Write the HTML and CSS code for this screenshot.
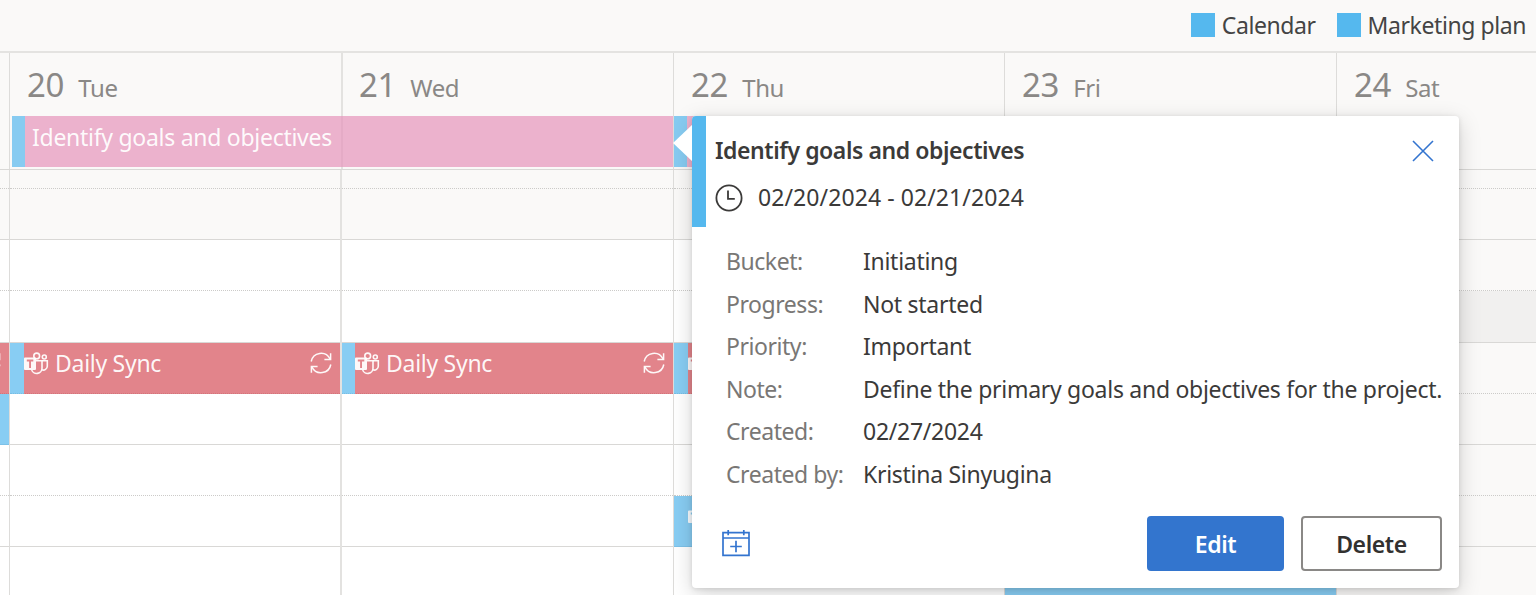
FILE: index.html
```html
<!DOCTYPE html>
<html lang="en">
  <head>
    <meta charset="UTF-8" />
    <meta name="viewport" content="width=device-width, initial-scale=1.0" />
    <title>Calendar</title>
    <link rel="stylesheet" href="styles.css">
  </head>
  <body>
    <!-- Shared icons -->
    <svg class="icon-defs" xmlns="http://www.w3.org/2000/svg">
      <symbol id="icon-teams" viewBox="0 0 25 24">
        <g fill="none" stroke="currentColor" stroke-width="1.6">
          <circle cx="12.7" cy="4" r="2.9"></circle>
          <circle cx="20.3" cy="5" r="2"></circle>
          <path d="M12 8.8h6V16a5.3 5.3 0 0 1-10.4 1.6"></path>
          <path d="M18 8.8h5.3v5.4a4 4 0 0 1-5.4 3.6"></path>
        </g>
        <path fill="currentColor" fill-rule="evenodd" d="M1 5.5h10a1 1 0 0 1 1 1v10.4a1 1 0 0 1-1 1H1a1 1 0 0 1-1-1V6.500a1 1 0 0 1 1-1zM2.800 7.500v1.900h2.300v6.600h1.900v-6.600h2.300V7.500z"></path>
      </symbol>
      <symbol id="icon-repeat" viewBox="0 0 22 22">
        <g fill="none" stroke="currentColor" stroke-width="1.5">
          <path d="M1.2 9.5a10 10 0 0 1 18.8-2.6"></path>
          <path d="M20.6 1.2v6.2h-6.2"></path>
          <path d="M20.8 12.5A10 10 0 0 1 2 15.1"></path>
          <path d="M1.4 20.8v-6.2h6.2"></path>
        </g>
      </symbol>
    </svg>

    <div class="legend">
      <div class="legend-item"><span class="legend-color"></span>Calendar</div>
      <div class="legend-item"><span class="legend-color"></span>Marketing plan</div>
    </div>

    <div class="days">
      <div class="day"></div>
      <div class="day"><span class="day-number">20</span><span class="day-name">Tue</span></div>
      <div class="day wide-line"><span class="day-number">21</span><span class="day-name">Wed</span></div>
      <div class="day"><span class="day-number">22</span><span class="day-name">Thu</span></div>
      <div class="day"><span class="day-number">23</span><span class="day-name">Fri</span></div>
      <div class="day"><span class="day-number">24</span><span class="day-name">Sat</span></div>
      <div class="event all-day goals">Identify goals and objectives</div>
      <div class="event all-day next"></div>
    </div>

    <div class="grid">
      <div class="column">
        <div class="slot off"></div>
        <div class="slot off"></div>
        <div class="slot"></div>
        <div class="slot"></div>
        <div class="slot"></div>
        <div class="slot"></div>
        <div class="slot"></div>
        <div class="slot"></div>
        <div class="slot"></div>
        <div class="event sync ending"><svg class="repeat"><use href="#icon-repeat"></use></svg></div>
        <div class="event busy after-sync"></div>
      </div>
      <div class="column">
        <div class="slot off"></div>
        <div class="slot off"></div>
        <div class="slot"></div>
        <div class="slot"></div>
        <div class="slot"></div>
        <div class="slot"></div>
        <div class="slot"></div>
        <div class="slot"></div>
        <div class="slot"></div>
        <div class="event sync">
          <svg class="teams"><use href="#icon-teams"></use></svg>
          <span>Daily Sync</span>
          <svg class="repeat"><use href="#icon-repeat"></use></svg>
        </div>
      </div>
      <div class="column wide-line">
        <div class="slot off"></div>
        <div class="slot off"></div>
        <div class="slot"></div>
        <div class="slot"></div>
        <div class="slot"></div>
        <div class="slot"></div>
        <div class="slot"></div>
        <div class="slot"></div>
        <div class="slot"></div>
        <div class="event sync">
          <svg class="teams"><use href="#icon-teams"></use></svg>
          <span>Daily Sync</span>
          <svg class="repeat"><use href="#icon-repeat"></use></svg>
        </div>
      </div>
      <div class="column">
        <div class="slot off"></div>
        <div class="slot off"></div>
        <div class="slot"></div>
        <div class="slot"></div>
        <div class="slot"></div>
        <div class="slot"></div>
        <div class="slot"></div>
        <div class="slot"></div>
        <div class="slot"></div>
        <div class="event sync">
          <svg class="teams"><use href="#icon-teams"></use></svg>
        </div>
        <div class="event busy meeting">
          <svg class="teams"><use href="#icon-teams"></use></svg>
        </div>
      </div>
      <div class="column">
        <div class="slot off"></div>
        <div class="slot off"></div>
        <div class="slot"></div>
        <div class="slot"></div>
        <div class="slot"></div>
        <div class="slot"></div>
        <div class="slot"></div>
        <div class="slot"></div>
        <div class="slot"></div>
        <div class="event busy late"></div>
      </div>
      <div class="column weekend">
        <div class="slot off"></div>
        <div class="slot off"></div>
        <div class="slot"></div>
        <div class="slot selected"></div>
        <div class="slot"></div>
        <div class="slot"></div>
        <div class="slot"></div>
        <div class="slot"></div>
        <div class="slot"></div>
      </div>
    </div>

    <div class="callout">
      <div class="callout-header">
        <div class="callout-title">
          <h2>Identify goals and objectives</h2>
          <button class="close" aria-label="Close">
            <svg width="22" height="22" viewBox="0 0 22 22" fill="none" stroke="currentColor" stroke-width="1.6">
              <path d="M1 1l20 20M21 1L1 21"></path>
            </svg>
          </button>
        </div>
        <div class="callout-date">
          <svg width="28" height="28" viewBox="0 0 28 28" fill="none" stroke="currentColor" stroke-width="1.8">
            <circle cx="14" cy="14" r="12.6"></circle>
            <path d="M13 6.500v8.300h6.800"></path>
          </svg>
          <span>02/20/2024 - 02/21/2024</span>
        </div>
      </div>
      <dl class="details">
        <dt>Bucket:</dt>
        <dd>Initiating</dd>
        <dt>Progress:</dt>
        <dd>Not started</dd>
        <dt>Priority:</dt>
        <dd>Important</dd>
        <dt>Note:</dt>
        <dd>Define the primary goals and objectives for the project.</dd>
        <dt>Created:</dt>
        <dd>02/27/2024</dd>
        <dt>Created by:</dt>
        <dd>Kristina Sinyugina</dd>
      </dl>
      <div class="actions">
        <svg class="add" width="28" height="28" viewBox="0 0 28 28" fill="none" stroke="currentColor" stroke-width="1.7">
          <path d="M1 3.600h26v22.800H1zM1 9h26M6.200 1v5.300M21.800 1v5.300M14 11.700v11.600M8.200 17.500h11.600"></path>
        </svg>
        <button class="button primary">Edit</button>
        <button class="button">Delete</button>
      </div>
    </div>
  </body>
</html>
```
FILE: styles.css
```css
:root {
  --blue: #55b8ee;
  --event-blue: #55b8eeb3;
  --event-pink: #e594bbb3;
  --event-red: #d5505ab3;
  --line: #dddcda;
  --off-hours: #faf9f8;
}
* {
  box-sizing: border-box;
}
body {
  position: relative;
  height: 595px;
  margin: 0;
  overflow: hidden;
  background-color: var(--off-hours);
  color: #3b3a39;
  font-family: "Noto Sans", "Open Sans", sans-serif;
  font-size: 23px;
  letter-spacing: -0.28px;
}
.icon-defs {
  display: none;
}
.legend {
  display: flex;
  justify-content: flex-end;
  align-items: center;
  gap: 21px;
  height: 53px;
  padding: 0 10px 2px 0;
  border-bottom: 2px solid #e4e3e1;
  color: #444;
  letter-spacing: -0.42px;
}
.legend-item {
  display: flex;
  align-items: center;
  gap: 7px;
}
.legend-color {
  width: 24px;
  height: 24px;
  background-color: var(--blue);
}

/* Day headers and all-day events */
.days {
  display: grid;
  grid-template-columns: 9px 332px 332px 331px 332px minmax(0, 1fr);
  grid-template-rows: 63px 53px;
  height: 117px;
  border-bottom: 1px solid #d9d8d6;
}
.day {
  grid-row: 1 / 3;
  padding: 9px 0 0 17px;
  border-left: 1px solid var(--line);
  color: #8a8886;
  line-height: 46px;
}
.day:first-child {
  padding: 0;
  border-left: none;
}
.day:nth-child(1) { grid-column: 1; }
.day:nth-child(2) { grid-column: 2; }
.day:nth-child(3) { grid-column: 3; }
.day:nth-child(4) { grid-column: 4; }
.day:nth-child(5) { grid-column: 5; }
.day:nth-child(6) { grid-column: 6; }
.day.wide-line,
.column.wide-line {
  border-left: 2px solid #e3e2e0;
}
.day.wide-line {
  padding-left: 16px;
}
.day-number {
  margin-right: 14px;
  font-size: 33px;
}
.day-name {
  font-size: 24px;
  letter-spacing: -0.4px;
}
.event {
  z-index: 1;
  overflow: hidden;
  border-left: 13px solid var(--event-blue);
  background-clip: padding-box;
  color: #fffffff0;
  white-space: nowrap;
}
.all-day {
  grid-row: 2;
  height: 51px;
  padding-left: 7px;
  background-color: var(--event-pink);
  line-height: 42px;
}
.goals {
  grid-column: 2 / 4;
  margin-left: 3px;
}
.next {
  grid-column: 4;
  margin-left: 1px;
}

/* Time slots */
.grid {
  display: grid;
  grid-template-columns: 9px 331px 333px 331px 332px minmax(0, 1fr);
}
.column {
  display: grid;
  grid-template-rows: 19px 51px 51px 52px 51px 51px 51px 51px 51px;
  grid-template-columns: 100%;
  background-color: #fff;
  border-left: 1px solid var(--line);
}
.column:first-child {
  border-left: none;
}
.slot {
  grid-column: 1;
  border-bottom: 1px solid #d9d8d6;
}
.slot:nth-child(odd) {
  border-bottom: 1px dotted #cccbc9;
}
.off,
.weekend {
  background-color: var(--off-hours);
}
.selected {
  background-color: #f1f0ef;
}
.slot:nth-child(1) { grid-row: 1; }
.slot:nth-child(2) { grid-row: 2; }
.slot:nth-child(3) { grid-row: 3; }
.slot:nth-child(4) { grid-row: 4; }
.slot:nth-child(5) { grid-row: 5; }
.slot:nth-child(6) { grid-row: 6; }
.slot:nth-child(7) { grid-row: 7; }
.slot:nth-child(8) { grid-row: 8; }
.slot:nth-child(9) { grid-row: 9; }
.sync {
  display: flex;
  grid-row: 5;
  grid-column: 1;
  align-items: flex-start;
  padding: 0 8px 0 0;
  border-left-width: 14px;
  background-color: var(--event-red);
  line-height: 41px;
}
.wide-line .sync {
  border-left-width: 13px;
}
.teams {
  flex: none;
  width: 25px;
  height: 24px;
  margin: 9px 6px 0 0;
}
.repeat {
  flex: none;
  width: 22px;
  height: 22px;
  margin: 9px 0 0 auto;
}
.ending {
  justify-content: flex-end;
  border-left: none;
}
.busy {
  grid-column: 1;
  background-color: var(--event-blue);
}
.after-sync {
  grid-row: 6;
  border-left: none;
}
.meeting {
  grid-row: 8;
  border-left-width: 14px;
}
.late {
  grid-row: 9;
  margin-top: 40px;
}

/* Task details shown over the calendar */
.callout {
  position: absolute;
  z-index: 2;
  top: 116px;
  left: 692px;
  display: flex;
  flex-direction: column;
  width: 767px;
  height: 472px;
  border-radius: 4px;
  background-color: #fff;
  box-shadow: 0 6px 22px rgba(0, 0, 0, 0.17), 0 1px 5px rgba(0, 0, 0, 0.12);
}
.callout::before {
  content: "";
  position: absolute;
  top: 8px;
  left: -19px;
  width: 20px;
  height: 38px;
  background-color: #fff;
  clip-path: polygon(100% 0, 0 50%, 100% 100%);
}
.callout-header {
  position: relative;
  height: 111px;
  padding: 14px 25px 0 9px;
  border-left: 14px solid var(--blue);
  border-top-left-radius: 4px;
}
.callout-title {
  display: flex;
  justify-content: space-between;
  align-items: center;
  height: 42px;
}
.callout h2 {
  margin: -2px 0 0;
  font-size: 23px;
  font-weight: 600;
  letter-spacing: -0.43px;
}
.close {
  display: flex;
  padding: 0;
  border: none;
  background: none;
  color: #3374cf;
}
.callout-date {
  display: flex;
  align-items: center;
  gap: 15px;
  height: 51px;
  letter-spacing: 0.08px;
}
.callout-date span {
  margin-top: -1px;
}
.details {
  display: grid;
  grid-template-columns: 137px auto;
  grid-auto-rows: 42.6px;
  margin: 13px 0 0 34px;
  line-height: 43px;
  white-space: nowrap;
}
.details dt {
  color: #797775;
  letter-spacing: -0.45px;
}
.details dd {
  margin: 0;
}
.actions {
  display: flex;
  align-items: center;
  gap: 17px;
  margin-top: auto;
  padding: 0 17px 17px 30px;
}
.add {
  margin: 0 auto 1px 0;
  color: #3374cf;
}
.button {
  width: 141px;
  height: 55px;
  padding: 0;
  border: 2px solid #8a8886;
  border-radius: 4px;
  background-color: #fff;
  color: #323130;
  font: inherit;
  font-weight: 600;
  letter-spacing: -0.4px;
}
.primary {
  width: 137px;
  border: none;
  background-color: #3375ce;
  color: #fff;
}
```
